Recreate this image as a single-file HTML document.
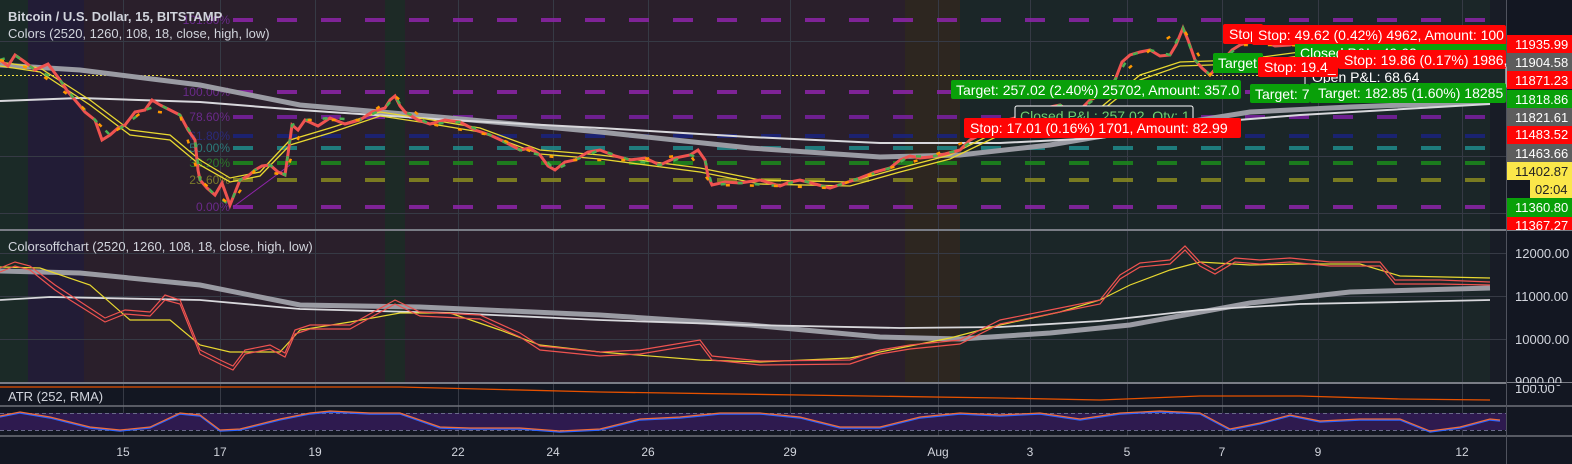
<!DOCTYPE html>
<html><head><meta charset="utf-8"><style>
html,body{margin:0;padding:0;background:#131722;width:1572px;height:464px;overflow:hidden;font-family:"Liberation Sans",sans-serif}
svg{display:block}
.t{font-family:"Liberation Sans",sans-serif}
</style></head><body>
<svg width="1572" height="464" viewBox="0 0 1572 464" xmlns="http://www.w3.org/2000/svg">
<rect width="1572" height="464" fill="#131722"/>
<g>
<rect x="0" y="0" width="28" height="383" fill="#1b2a27"/>
<rect x="28" y="0" width="56" height="383" fill="#221c36"/>
<rect x="84" y="0" width="301" height="383" fill="#2a1f2b"/>
<rect x="385" y="0" width="20" height="383" fill="#1d2a26"/>
<rect x="405" y="0" width="500" height="383" fill="#2a1f2b"/>
<rect x="905" y="0" width="55" height="383" fill="#2d2620"/>
<rect x="960" y="0" width="530" height="383" fill="#1b2628"/>
<rect x="1490" y="0" width="16" height="383" fill="#181c26"/>
</g>
<g stroke="#363a45" stroke-width="1">
<line x1="0" y1="41.5" x2="1506" y2="41.5"/><line x1="0" y1="156.5" x2="1506" y2="156.5"/><line x1="0" y1="213.5" x2="1506" y2="213.5"/>
<line x1="0" y1="253.5" x2="1506" y2="253.5"/><line x1="0" y1="296.5" x2="1506" y2="296.5"/><line x1="0" y1="339.5" x2="1506" y2="339.5"/>
<line x1="123.5" y1="0" x2="123.5" y2="436"/><line x1="220.5" y1="0" x2="220.5" y2="436"/><line x1="315.5" y1="0" x2="315.5" y2="436"/>
<line x1="458.5" y1="0" x2="458.5" y2="436"/><line x1="553.5" y1="0" x2="553.5" y2="436"/><line x1="648.5" y1="0" x2="648.5" y2="436"/>
<line x1="790.5" y1="0" x2="790.5" y2="436"/><line x1="938.5" y1="0" x2="938.5" y2="436"/><line x1="1030.5" y1="0" x2="1030.5" y2="436"/>
<line x1="1127.5" y1="0" x2="1127.5" y2="436"/><line x1="1222.5" y1="0" x2="1222.5" y2="436"/><line x1="1318.5" y1="0" x2="1318.5" y2="436"/><line x1="1462.5" y1="0" x2="1462.5" y2="436"/>
</g>
<g stroke="#7a7d86" stroke-width="2">
<line x1="0" y1="230" x2="1572" y2="230"/><line x1="0" y1="383" x2="1572" y2="383"/>
</g>
<g stroke="#6f727b" stroke-width="1.5"><line x1="0" y1="406" x2="1572" y2="406"/><line x1="0" y1="436" x2="1572" y2="436"/></g>
<line x1="1506.5" y1="0" x2="1506.5" y2="464" stroke="#50535e"/>
<g stroke-width="4" stroke-dasharray="20 24" opacity="0.85">
<line x1="233" y1="20" x2="1490" y2="20" stroke="#8e24aa"/>
<line x1="233" y1="92" x2="1490" y2="92" stroke="#8e24aa"/>
<line x1="233" y1="117" x2="1490" y2="117" stroke="#7b1fa2"/>
<line x1="233" y1="136" x2="1490" y2="136" stroke="#1a237e"/>
<line x1="233" y1="148" x2="1490" y2="148" stroke="#1f8c8c"/>
<line x1="233" y1="163" x2="1490" y2="163" stroke="#1c8a1c"/>
<line x1="233" y1="180" x2="1490" y2="180" stroke="#8a8a20"/>
<line x1="233" y1="207" x2="1490" y2="207" stroke="#8e24aa"/>
</g>
<g class="t" font-size="12" fill="#6a2a8a" text-anchor="end">
<text x="230" y="24">101.80%</text><text x="230" y="96">100.00%</text><text x="230" y="121">78.60%</text><text x="230" y="140" fill="#2a2a7a">61.80%</text><text x="230" y="152" fill="#2a7a7a">50.00%</text><text x="230" y="167" fill="#2a7a2a">38.20%</text><text x="230" y="184" fill="#7a7a2a">23.60%</text><text x="230" y="211">0.00%</text>
</g>
<line x1="233" y1="207" x2="290" y2="165" stroke="#8e24aa" stroke-width="1"/>
<line x1="0" y1="75.5" x2="1506" y2="75.5" stroke="#f5e342" stroke-dasharray="2 2" stroke-width="1"/>
<polyline fill="none" stroke="#9a9ba3" stroke-width="5" points="0,65 80,70 200,85 300,105 450,118 600,132 750,148 880,157 960,155 1050,145 1150,128 1250,112 1350,107 1490,102"/>
<polyline fill="none" stroke="#d8d8dc" stroke-width="2" points="0,101 80,98 200,102 300,110 450,120 600,128 750,137 880,143 1000,143 1100,138 1200,123 1300,115 1490,104"/>
<polyline fill="none" stroke="#e8d830" stroke-width="1.3" points="0,62 40,68 90,100 130,130 170,135 200,160 230,178 260,172 290,140 330,128 380,112 420,118 480,128 540,150 600,155 700,168 760,180 850,182 900,168 950,155 1000,130 1060,118 1100,108 1140,75 1180,62 1240,60 1300,52 1400,50 1490,58"/>
<polyline fill="none" stroke="#e8d830" stroke-width="1.3" points="0,66 40,72 90,105 130,135 170,140 200,165 230,182 260,176 290,145 330,133 380,116 420,122 480,132 540,154 600,159 700,172 760,184 850,186 900,172 950,159 1000,135 1060,122 1100,112 1140,80 1180,66 1240,64 1300,56 1400,54 1490,62"/>
<polyline fill="none" stroke="#ef5350" stroke-width="3" points="0,60 8,66 15,55 25,62 35,70 48,64 60,80 68,92 75,100 85,112 95,120 102,140 110,135 118,128 125,125 135,112 145,110 152,100 160,105 170,110 180,115 188,130 195,140 198,170 200,180 207,188 215,195 222,183 230,205 236,190 240,180 248,176 255,170 262,166 270,165 278,172 285,175 290,140 292,125 298,130 305,120 318,126 330,118 345,124 360,120 372,112 385,108 390,100 395,96 400,106 405,112 418,120 430,124 445,120 460,122 475,130 490,135 505,142 520,150 530,148 540,155 548,166 555,170 565,162 575,160 588,152 600,150 615,156 630,160 645,158 660,165 675,158 690,155 698,150 705,160 708,176 712,185 725,182 740,183 760,180 780,186 790,182 800,180 815,184 830,188 845,183 860,178 875,172 890,168 900,160 910,156 920,158 930,157 945,154 960,150 970,140 980,135 990,128 1000,122 1015,118 1030,115 1045,108 1060,105 1070,112 1080,110 1090,100 1100,95 1108,88 1115,80 1122,62 1130,55 1140,52 1150,50 1160,56 1170,55 1176,45 1183,28 1188,40 1195,60 1202,68 1210,75 1218,66 1225,58 1232,50 1240,45 1250,42 1260,40 1275,46 1290,45 1300,40 1310,35 1325,44 1340,48 1355,42 1370,45 1380,60 1390,72 1405,68 1420,70 1435,74 1450,75 1470,72 1490,76"/>
<polyline fill="none" stroke="#4caf50" stroke-width="2.5" stroke-dasharray="5 12" points="0,60 15,55 35,70 60,80 75,100 95,120 110,135 125,125 145,110 160,105 180,115 195,140 200,180 215,195 230,205 240,180 255,170 270,165 285,175 292,125 305,120 330,118 360,120 385,108 395,96 405,112 430,124 460,122 490,135 520,150 540,155 555,170 575,160 600,150 630,160 660,165 690,155 705,160 712,185 740,183 780,186 800,180 830,188 860,178 890,168 910,156 930,157 960,150 980,135 1000,122 1030,115 1060,105 1080,110 1100,95 1115,80 1130,55 1150,50 1170,55 1183,28 1195,60 1210,75 1225,58 1240,45 1260,40 1290,45 1310,35 1340,48 1370,45 1390,72 1420,70 1450,75 1490,76"/>
<polyline fill="none" stroke="#ff9800" stroke-width="2.5" stroke-dasharray="4 20" points="0,60 35,70 75,100 110,135 145,110 180,115 200,180 230,205 255,170 285,175 305,120 360,120 395,96 430,124 490,135 540,155 575,160 630,160 690,155 712,185 780,186 830,188 890,168 930,157 980,135 1030,115 1080,110 1115,80 1150,50 1183,28 1210,75 1240,45 1290,45 1340,48 1390,72 1450,75 1490,76"/>
<g class="t" font-size="14" fill="#fff">
<rect x="951" y="80" width="290" height="19" rx="2" fill="#09a009"/><text x="956" y="95">Target: 257.02 (2.40%) 25702, Amount: 357.0</text>
<rect x="1015" y="106" width="178" height="22" rx="2" fill="#1b2628" stroke="#fff"/><text x="1020" y="121" fill="#6fcf6f">Closed P&amp;L: 257.02, Qty: 1</text>
<rect x="964" y="118" width="277" height="20" rx="2" fill="#ff0505"/><text x="970" y="133">Stop: 17.01 (0.16%) 1701, Amount: 82.99</text>
<rect x="1213" y="53" width="50" height="20" rx="2" fill="#09a009"/><text x="1218" y="68">Target</text>
<rect x="1223" y="24" width="40" height="20" rx="2" fill="#ff0505"/><text x="1229" y="39">Stop</text>
<rect x="1252" y="25" width="254" height="20" rx="2" fill="#ff0505"/><text x="1258" y="40">Stop: 49.62 (0.42%) 4962, Amount: 100</text>
<rect x="1295" y="44" width="211" height="18" fill="#09a009"/><text x="1300" y="58">Closed P&amp;L: 49.62</text>
<rect x="1305" y="67" width="201" height="20" fill="#1b2628" stroke="#fff"/><text x="1312" y="82">Open P&amp;L: 68.64</text>
<rect x="1258" y="57" width="80" height="20" rx="2" fill="#ff0505"/><text x="1264" y="72">Stop: 19.4_</text>
<rect x="1338" y="50" width="168" height="19" rx="2" fill="#ff0505"/><text x="1344" y="65">Stop: 19.86 (0.17%) 1986,</text>
<rect x="1250" y="84" width="60" height="19" rx="2" fill="#09a009"/><text x="1255" y="99">Target: 7:</text>
<rect x="1310" y="83" width="196" height="20" rx="2" fill="#09a009"/><text x="1318" y="98">Target: 182.85 (1.60%) 18285</text>
</g>
<g class="t" fill="#d1d4dc">
<text x="8" y="21" font-size="13" font-weight="bold">Bitcoin / U.S. Dollar, 15, BITSTAMP</text>
<text x="8" y="38" font-size="13">Colors (2520, 1260, 108, 18, close, high, low)</text>
<text x="8" y="251" font-size="13">Colorsoffchart (2520, 1260, 108, 18, close, high, low)</text>
<text x="8" y="401" font-size="13">ATR (252, RMA)</text>
<text x="8" y="428" font-size="13">Stoch (140, 18, 60)</text>
</g>
<polyline fill="none" stroke="#9a9ba3" stroke-width="5" points="0,271 80,273 200,285 300,305 420,307 600,315 750,325 880,337 960,339 1050,333 1130,325 1250,303 1350,292 1490,288"/>
<polyline fill="none" stroke="#d8d8dc" stroke-width="1.8" points="0,300 50,297 200,300 300,309 450,313 600,320 750,325 900,328 1000,327 1100,321 1200,310 1300,304 1400,302 1490,300"/>
<polyline fill="none" stroke="#e8d830" stroke-width="1.2" points="0,267 40,268 90,285 130,320 170,320 200,345 230,352 280,352 300,330 350,322 400,313 450,313 500,330 540,345 600,352 700,360 760,362 850,358 900,348 950,338 1000,325 1060,312 1100,300 1130,285 1170,270 1200,262 1250,265 1300,264 1360,264 1400,276 1490,278"/>
<polyline fill="none" stroke="#ef5350" stroke-width="1.2" points="0,268 15,262 30,266 55,285 70,295 105,318 125,310 150,312 165,295 180,300 200,350 220,360 233,366 245,350 270,345 285,353 295,330 310,325 350,325 395,300 420,312 480,315 520,333 540,346 560,348 600,352 640,350 700,340 712,356 760,361 850,360 880,350 910,345 960,340 1000,320 1050,310 1100,300 1120,275 1140,263 1170,260 1185,246 1200,262 1215,270 1235,258 1260,260 1290,258 1330,262 1380,262 1395,280 1440,280 1490,282"/>
<polyline fill="none" stroke="#ef5350" stroke-width="1.2" points="0,272 15,266 30,270 55,290 70,300 105,322 125,314 150,316 165,300 180,304 200,354 220,364 233,370 245,354 270,349 285,357 295,334 310,329 350,329 395,304 420,316 480,319 520,337 540,350 560,352 600,356 640,354 700,344 712,360 760,365 850,364 880,354 910,349 960,344 1000,324 1050,314 1100,304 1120,279 1140,267 1170,264 1185,250 1200,266 1215,274 1235,262 1260,264 1290,262 1330,266 1380,266 1395,284 1440,284 1490,285"/>
<polyline fill="none" stroke="#e65100" stroke-width="1.3" points="0,387 200,387 400,387 600,392 800,395 1000,398 1100,400 1200,396 1300,396 1400,399 1490,400"/>
<rect x="0" y="413" width="1506" height="17" fill="#2e1a4f"/>
<line x1="0" y1="413.5" x2="1506" y2="413.5" stroke="#6a6a8a" stroke-dasharray="4 3"/>
<line x1="0" y1="430.5" x2="1506" y2="430.5" stroke="#6a6a8a" stroke-dasharray="4 3"/>
<polyline fill="none" stroke="#2962ff" stroke-width="1.4" points="0,417 20,413 50,418 90,428 120,431 150,428 180,414 200,416 220,431 240,430 280,420 310,414 330,412 370,414 400,414 440,428 470,429 520,429 560,432 600,430 640,420 680,418 720,414 760,414 800,418 840,428 880,428 920,418 960,414 1000,416 1040,414 1080,420 1120,414 1160,412 1200,414 1230,430 1260,424 1290,416 1320,422 1360,420 1400,420 1430,432 1460,428 1490,420 1500,421"/>
<polyline fill="none" stroke="#ef6c3a" stroke-width="1.2" points="0,416 20,412 50,417 90,427 120,430 150,427 180,413 200,415 220,430 240,429 280,419 310,413 330,411 370,413 400,413 440,427 470,428 520,428 560,431 600,429 640,419 680,417 720,413 760,413 800,417 840,427 880,427 920,417 960,413 1000,415 1040,413 1080,419 1120,413 1160,411 1200,413 1230,429 1260,423 1290,415 1320,421 1360,419 1400,419 1430,431 1460,427 1490,419 1500,420"/>
<g class="t" font-size="13">
<rect x="1507" y="35" width="65" height="18" fill="#ff0505"/><text x="1515" y="49" fill="#fff">11935.99</text>
<rect x="1507" y="53" width="65" height="18" fill="#5d5d5d"/><text x="1515" y="67" fill="#fff">11904.58</text>
<rect x="1507" y="71" width="65" height="18" fill="#ff0505"/><text x="1515" y="85" fill="#fff">11871.23</text>
<rect x="1507" y="90" width="65" height="18" fill="#09a009"/><text x="1515" y="104" fill="#fff">11818.86</text>
<rect x="1507" y="108" width="65" height="18" fill="#5d5d5d"/><text x="1515" y="122" fill="#fff">11821.61</text>
<rect x="1507" y="126" width="65" height="18" fill="#ff0505"/><text x="1515" y="139" fill="#fff">11483.52</text>
<rect x="1507" y="144" width="65" height="18" fill="#5d5d5d"/><text x="1515" y="158" fill="#fff">11463.66</text>
<rect x="1507" y="162" width="65" height="18" fill="#fbe74a"/><text x="1515" y="176" fill="#222">11402.87</text>
<rect x="1530" y="180" width="42" height="18" fill="#fbe74a"/><text x="1535" y="194" fill="#222">02:04</text>
<rect x="1507" y="198" width="65" height="19" fill="#09a009"/><text x="1515" y="212" fill="#fff">11360.80</text>
<rect x="1507" y="217" width="65" height="13" fill="#ff0505"/><text x="1515" y="230" fill="#fff">11367.27</text>
<g fill="#d1d4dc"><text x="1515" y="258">12000.00</text><text x="1515" y="301">11000.00</text><text x="1515" y="344">10000.00</text><text x="1515" y="386">9000.00</text><text x="1515" y="393">100.00</text></g>
</g>
<rect x="1507" y="383" width="65" height="2" fill="#131722"/>
<g class="t" font-size="12" fill="#d1d4dc" text-anchor="middle">
<text x="123" y="456">15</text><text x="220" y="456">17</text><text x="315" y="456">19</text><text x="458" y="456">22</text><text x="553" y="456">24</text><text x="648" y="456">26</text><text x="790" y="456">29</text><text x="938" y="456">Aug</text><text x="1030" y="456">3</text><text x="1127" y="456">5</text><text x="1222" y="456">7</text><text x="1318" y="456">9</text><text x="1462" y="456">12</text>
</g>
</svg>
</body></html>
